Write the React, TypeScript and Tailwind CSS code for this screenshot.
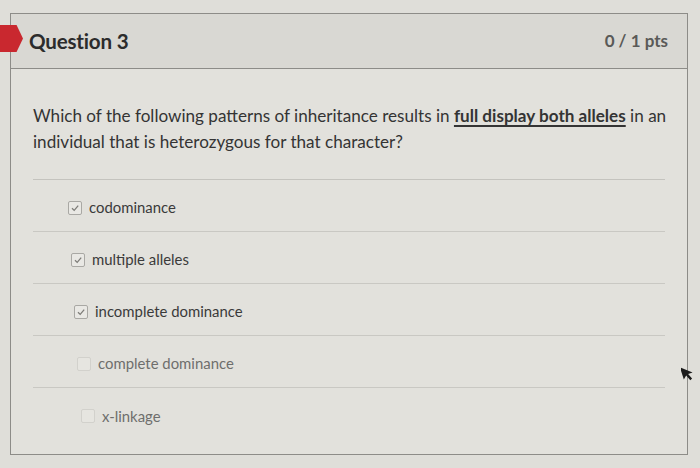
import React from "react";

const answers = [
  { text: "codominance", checked: true, indent: "pl-[35px]" },
  { text: "multiple alleles", checked: true, indent: "pl-[38px]" },
  { text: "incomplete dominance", checked: true, indent: "pl-[41px]" },
  { text: "complete dominance", checked: false, indent: "pl-[44px]" },
  { text: "x-linkage", checked: false, indent: "pl-[48px]" },
];

function Box({ checked }: { checked: boolean }) {
  return (
    <span
      className={
        checked
          ? "flex h-[14px] w-[14px] items-center justify-center rounded-[2px] border border-[#a9a8a4] bg-[#e9e8e4]"
          : "flex h-[14px] w-[14px] items-center justify-center rounded-[2px] border border-[#d2d1cc] bg-[#e6e5e0]"
      }
    >
      {checked && (
        <svg viewBox="0 0 10 10" className="h-[10px] w-[10px]">
          <path d="M2 5.2 L4.2 7.4 L8.2 2.6" fill="none" stroke="#7d7c78" strokeWidth="1.3" />
        </svg>
      )}
    </span>
  );
}

export default function App() {
  return (
    <div
      className="relative h-[468px] w-[700px] overflow-hidden bg-[#dfded9] pl-[10px] pr-[12px] pt-[13px]"
      style={{ fontFamily: "Lato, 'Open Sans', sans-serif" }}
    >
      <div className="h-[442px] border border-[#8d8c88] bg-[#e2e1dc]">
        <div className="flex h-[55px] items-center justify-between border-b border-[#8d8c88] bg-[#d9d8d3] pl-[18px] pr-[19px]">
          <span className="text-[20.6px] font-bold tracking-[-0.2px] text-[#2c2c2c]">Question 3</span>
          <span className="text-[17px] font-bold text-[#5a5a58]">0 / 1 pts</span>
        </div>

        <div className="pl-[22px] pr-[10px] pt-[34px]">
          <p className="text-[17.1px] leading-[26px] text-[#343434]">
            Which of the following patterns of inheritance results in{" "}
            <span className="font-bold underline decoration-[1.5px] underline-offset-[3px]">full display both alleles</span> in an
            individual that is heterozygous for that character?
          </p>

          <div className="mr-[12px] mt-[24px] border-t border-[#c4c3be]">
            {answers.map((a, i) => (
              <div
                key={i}
                className={
                  (i < answers.length - 1 ? "border-b border-[#c9c8c3] " : "") +
                  "flex h-[52px] items-center gap-[7px] pt-[4px] " +
                  a.indent
                }
              >
                <Box checked={a.checked} />
                <span className={a.checked ? "text-[14.9px] text-[#3a3a3a]" : "text-[14.9px] text-[#6e6e6c]"}>{a.text}</span>
              </div>
            ))}
          </div>
        </div>
      </div>

      {/* red marker */}
      <div className="absolute left-0 top-[25px] h-[27px] w-[23px] bg-[#c9282f] [clip-path:polygon(0_0,72%_0,100%_50%,72%_100%,0_100%)]" />

      {/* mouse pointer */}
      <svg className="absolute left-[681px] top-[364px] h-[18px] w-[14px]" viewBox="0 0 14 18">
        <path d="M1 1 L1 14 L4.5 10.8 L7 16.5 L9.2 15.5 L6.8 10 L11.5 10 Z" fill="#1b1b1b" transform="rotate(-18 7 9)" />
      </svg>
    </div>
  );
}
